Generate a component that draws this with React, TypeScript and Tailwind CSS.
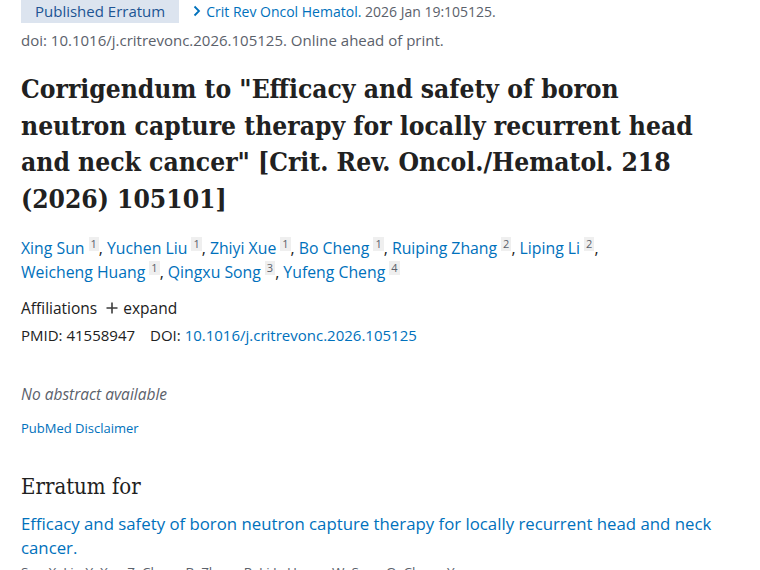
const authors: [string, string][] = [
  ['Xing Sun', '1'],
  ['Yuchen Liu', '1'],
  ['Zhiyi Xue', '1'],
  ['Bo Cheng', '1'],
  ['Ruiping Zhang', '2'],
  ['Liping Li', '2'],
  ['Weicheng Huang', '1'],
  ['Qingxu Song', '3'],
  ['Yufeng Cheng', '4'],
];

const sans = "font-['Open_Sans',sans-serif]";
const serif = "font-['DejaVu_Serif_Condensed','DejaVu_Serif',serif]";

export default function App() {
  return (
    <div className={`${sans} min-h-screen bg-white text-[#212121] px-[21px] overflow-hidden`}>
      <div className="flex items-center h-6 -mt-px">
        <span className="bg-[#dce4ef] text-[#205493] text-[15px] px-[14px] h-6 flex items-center whitespace-nowrap">
          Published Erratum
        </span>
        <span className="text-[14px] text-[#5b616b] flex items-center ml-[14px] whitespace-nowrap">
          <svg width="8" height="12" viewBox="0 0 8 12" className="mr-[5px]">
            <path d="M1.5 1.5 L6 6 L1.5 10.5" fill="none" stroke="#0071bc" strokeWidth="1.8" />
          </svg>
          <span className="text-[#0071bc]">Crit Rev Oncol Hematol.</span>
          <span>&nbsp;2026 Jan 19:105125.</span>
        </span>
      </div>
      <div className="text-[15px] text-[#5b616b] mt-[5px] leading-6">
        doi: 10.1016/j.critrevonc.2026.105125. Online ahead of print.
      </div>

      <h1 className={`${serif} font-bold text-[26.2px] leading-[36.5px] mt-[19px] text-[#212121] max-w-[690px]`}>
        Corrigendum to "Efficacy and safety of boron neutron capture therapy for locally recurrent head
        and neck cancer" [Crit. Rev. Oncol./Hematol. 218 (2026) 105101]
      </h1>

      <div className="text-[15.8px] leading-6 mt-[19px] max-w-[620px]">
        {authors.map(([name, n], i) => (
          <span key={name}>
            <span className="whitespace-nowrap">
              <span className="text-[#0071bc]">{name}</span>
              <span className="relative -top-[6px] ml-[4px] inline-block bg-[#efefef] text-[#5b616b] text-[11px] leading-[14px] px-[2px]">
                {n}
              </span>
              {i < authors.length - 1 && ','}
            </span>
            {i < authors.length - 1 && ' '}
          </span>
        ))}
      </div>

      <div className="text-[15.5px] mt-[12px] flex items-center leading-6">
        <span>Affiliations</span>
        <span className="ml-[9px] mr-[5px]">
          <svg width="12" height="12" viewBox="0 0 12 12">
            <path d="M6 0.5 V11.5 M0.5 6 H11.5" stroke="#3d3d3d" strokeWidth="1.6" />
          </svg>
        </span>
        <span>expand</span>
      </div>
      <div className="text-[15px] leading-6 mt-[3px]">
        PMID: 41558947<span className="ml-[15px]">DOI: </span>
        <span className="text-[#0071bc]">10.1016/j.critrevonc.2026.105125</span>
      </div>

      <div className="text-[15.5px] italic text-[#5b616b] mt-[35px] leading-6">No abstract available</div>
      <div className="text-[13px] text-[#0071bc] mt-[12px] leading-5">PubMed Disclaimer</div>

      <h2 className={`${serif} font-normal text-[22px] mt-[33px] leading-8 text-[#212121]`}>Erratum for</h2>
      <div className="text-[16.8px] text-[#0071bc] leading-[24px] mt-[9px] max-w-[705px]">
        Efficacy and safety of boron neutron capture therapy for locally recurrent head and neck cancer.
      </div>
      <div className="text-[13.5px] text-[#5b616b] leading-5 mt-[2px]">
        Sun X, Liu Y, Xue Z, Cheng B, Zhang R, Li L, Huang W, Song Q, Cheng Y.
      </div>
    </div>
  );
}
